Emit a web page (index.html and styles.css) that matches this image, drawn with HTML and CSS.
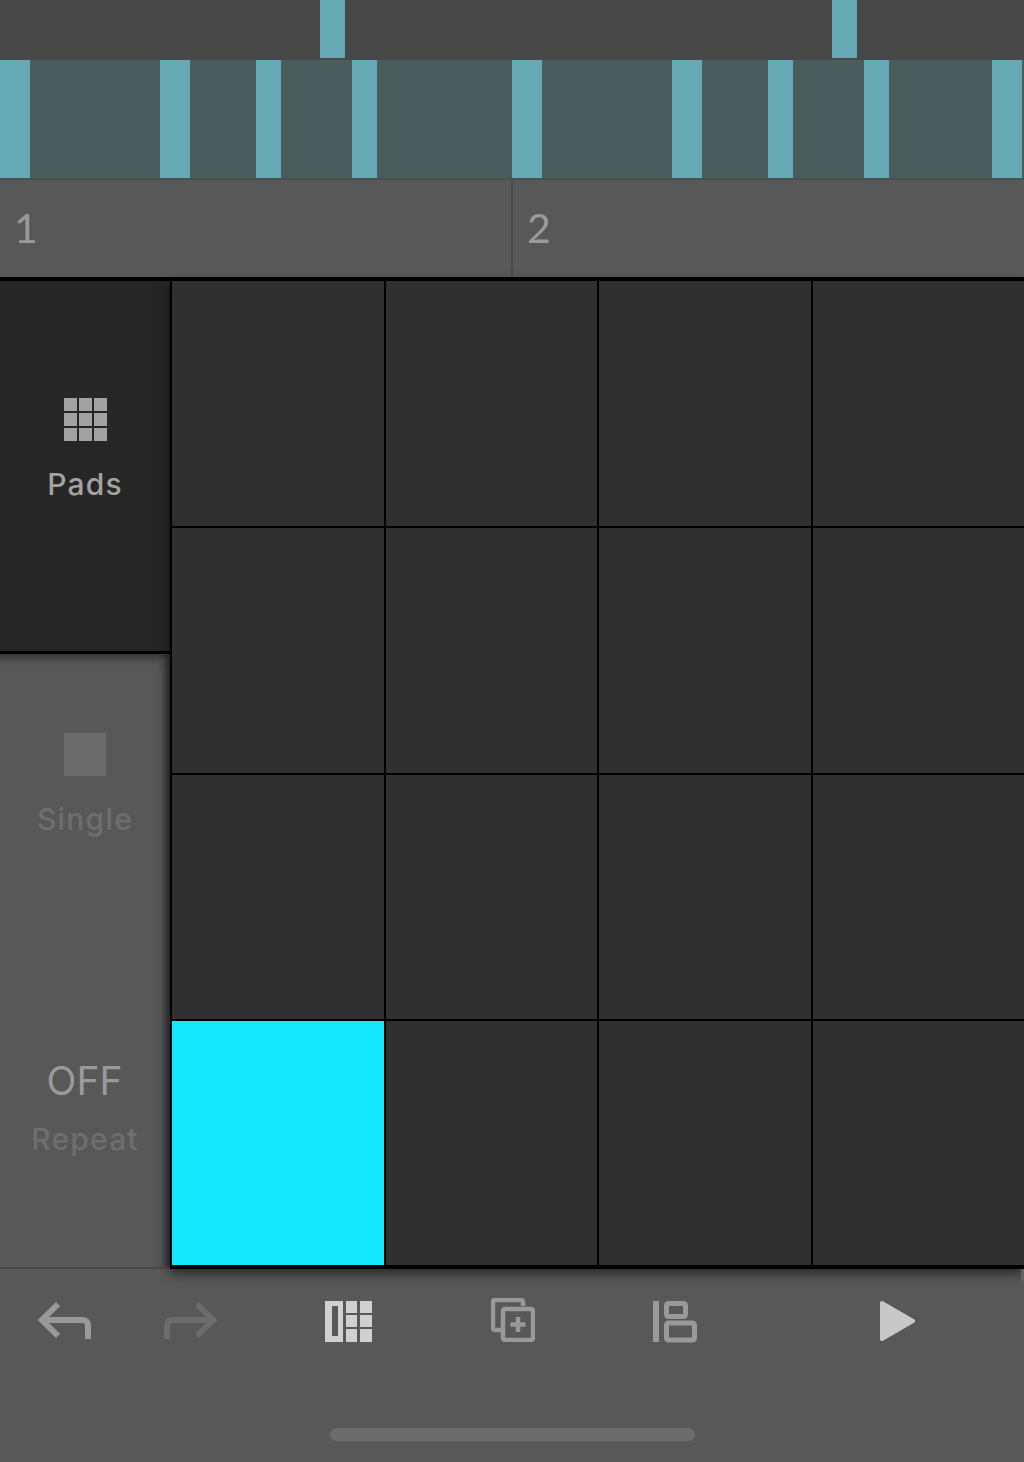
FILE: index.html
```html
<!DOCTYPE html>
<html lang="en">
<head>
    <meta charset="UTF-8">
    <meta name="viewport" content="width=device-width, initial-scale=1.0">
    <title>Pads</title>
    <link rel="stylesheet" href="styles.css">
</head>
<body>
    <div class="app">
        <!-- note lanes -->
        <div class="lane lane-top">
            <div class="note" style="left: 320px; width: 25px"></div>
            <div class="note" style="left: 832px; width: 25px"></div>
        </div>
        <div class="lane lane-main">
            <div class="note" style="left: 0; width: 30px"></div>
            <div class="note" style="left: 160px; width: 30px"></div>
            <div class="note" style="left: 256px; width: 25px"></div>
            <div class="note" style="left: 352px; width: 25px"></div>
            <div class="note" style="left: 512px; width: 30px"></div>
            <div class="note" style="left: 672px; width: 30px"></div>
            <div class="note" style="left: 768px; width: 25px"></div>
            <div class="note" style="left: 864px; width: 25px"></div>
            <div class="note" style="left: 992px; width: 30px"></div>
        </div>

        <div class="ruler">
            <div class="bar">1</div>
            <div class="bar">2</div>
        </div>

        <div class="main">
            <div class="side">
                <div class="side-btn pads">
                    <svg class="side-icon" viewBox="0 0 43 43">
                        <path fill="#a2a2a2" d="M0 0h13v13H0zM15 0h13v13H15zM30 0h13v13H30zM0 15h13v13H0zM15 15h13v13H15zM30 15h13v13H30zM0 30h13v13H0zM15 30h13v13H15zM30 30h13v13H30z"/>
                    </svg>
                    <span class="side-label">Pads</span>
                </div>
                <div class="side-lower">
                    <div class="side-btn single">
                        <div class="square"></div>
                        <span class="side-label">Single</span>
                    </div>
                    <div class="side-btn repeat">
                        <span class="off">OFF</span>
                        <span class="side-label">Repeat</span>
                    </div>
                </div>
            </div>

            <div class="pad-grid">
                <div class="pad"></div><div class="pad"></div><div class="pad"></div><div class="pad"></div>
                <div class="pad"></div><div class="pad"></div><div class="pad"></div><div class="pad"></div>
                <div class="pad"></div><div class="pad"></div><div class="pad"></div><div class="pad"></div>
                <div class="pad active"></div><div class="pad"></div><div class="pad"></div><div class="pad"></div>
            </div>
        </div>

        <div class="toolbar">
            <svg class="tool undo" width="54" height="38" viewBox="0 0 54 38" fill="none" stroke="#999" stroke-width="6">
                <path d="M21 3 L5 19 L21 35"/>
                <path d="M5 19 H45 Q51 19 51 25 V38"/>
            </svg>
            <svg class="tool redo" width="54" height="38" viewBox="0 0 54 38" fill="none" stroke="#6c6c6c" stroke-width="6">
                <path d="M33 3 L49 19 L33 35"/>
                <path d="M49 19 H9 Q3 19 3 25 V38"/>
            </svg>
            <svg class="tool layout" width="47" height="41" viewBox="0 0 47 41">
                <path fill="#d0d0d0" fill-rule="evenodd" d="M0 0H18V41H0zM7 5V35H13V5z"/>
                <path fill="#d0d0d0" d="M21 0h11v12H21zM35 0h12v12H35zM21 14h11v12H21zM35 14h12v12H35zM21 28h11v13H21zM35 28h12v13H35z"/>
            </svg>
            <svg class="tool dup" width="44" height="44" viewBox="0 0 44 44" fill="none" stroke="#999" stroke-width="4.500">
                <path d="M32 8 V4 Q32 2 30 2 H4 Q2 2 2 4 V30 Q2 32 4 32 H10"/>
                <rect x="12" y="11" width="30" height="31" rx="2"/>
                <path d="M27 19 V34 M19.500 26.500 H34.500"/>
            </svg>
            <svg class="tool align" width="44" height="42" viewBox="0 0 44 42">
                <path fill="#999" d="M0 0H6V41H0z"/>
                <rect x="13.500" y="2.500" width="19" height="13" rx="2" fill="none" stroke="#999" stroke-width="5"/>
                <rect x="13.500" y="22" width="28" height="17" rx="2" fill="none" stroke="#999" stroke-width="5"/>
            </svg>
            <svg class="tool play" width="35" height="40" viewBox="0 0 35 40">
                <path fill="#c8c8c8" stroke="#c8c8c8" stroke-width="4" stroke-linejoin="round" d="M2 2 L33 20 L2 38 Z"/>
            </svg>
        </div>

        <div class="home-bar"></div>
    </div>
</body>
</html>
```

FILE: styles.css
```css
body {
    margin: 0;
    background: #585858;
    font-family: "Inter", "Liberation Sans", sans-serif;
}
.app {
    width: 1024px;
    height: 1462px;
    position: relative;
    overflow: hidden;
    display: flex;
    flex-direction: column;
}

/* lanes */
.lane {
    position: relative;
    flex: none;
}
.lane-top {
    height: 60px;
    background: #484848;
}
.lane-top .note {
    height: 58px;
}
.lane-main {
    height: 118px;
    background: #4b5c5f;
    border-bottom: 2px solid #4a4f50;
}
.note {
    position: absolute;
    top: 0;
    height: 100%;
    background: #64a9b3;
}

/* ruler */
.ruler {
    flex: none;
    height: 97px;
    display: flex;
    background: #585858;
}
.bar {
    flex: 1;
    box-sizing: border-box;
    padding: 25px 0 0 14px;
    font-family: "Lato", "Liberation Sans", sans-serif;
    font-size: 41px;
    line-height: 46px;
    color: #9a9a9a;
}
.bar + .bar {
    border-left: 2px solid #4a4a4a;
}

/* middle part */
.main {
    flex: none;
    height: 992px;
    display: flex;
    background: #000;
    border-top: 4px solid #000;
    box-sizing: border-box;
}
.side {
    width: 170px;
    flex: none;
    display: flex;
    flex-direction: column;
    background: #000;
}
.side-btn {
    display: flex;
    flex-direction: column;
    align-items: center;
    box-sizing: border-box;
}
.pads {
    height: 370px;
    padding-top: 117px;
    background: #262626;
}
.side-lower {
    flex: 1;
    margin-top: 3px;
    display: flex;
    flex-direction: column;
    background: #585858;
    border-bottom: 2px solid #4a4a4a;
    box-shadow: inset -8px 8px 8px -4px rgba(0,0,0,0.45);
}
.single {
    padding-top: 79px;
    height: 385px;
}
.repeat {
    flex: 1;
    padding-top: 17px;
}
.side-icon {
    width: 43px;
    height: 43px;
}
.square {
    width: 42px;
    height: 43px;
    background: #6c6c6c;
}
.side-label {
    margin-top: 23px;
    font-size: 30px;
    font-weight: 500;
    line-height: 40px;
    letter-spacing: 1.2px;
    color: #a2a2a2;
}
.single .side-label,
.repeat .side-label {
    color: #6e6e6e;
}
.repeat .side-label {
    margin-top: 13px;
}
.off {
    margin-right: 1px;
    font-size: 39px;
    line-height: 50px;
    color: #9a9a9a;
}

/* pads */
.pad-grid {
    flex: 1;
    display: grid;
    grid-template-columns: repeat(4, 1fr);
    grid-template-rows: 245px 245px 244px 244px;
    gap: 2px;
    padding: 0 0 4px 2px;
    background: #000;
    box-shadow: 0 4px 12px rgba(0,0,0,0.6);
    position: relative;
    z-index: 1;
}
.pad {
    background: #303030;
}
.pad.active {
    background: #16e9ff;
}

/* bottom */
.toolbar {
    flex: 1;
    display: block;
    position: relative;
    background: #585858;
}
/* shadow stops short of the right edge */
.toolbar::after {
    content: "";
    position: absolute;
    top: 0;
    right: 0;
    z-index: 2;
    width: 3px;
    height: 12px;
    background: #626262;
}
.tool {
    position: absolute;
    top: 32px;
}
.undo { left: 37px; }
.redo { left: 164px; }
.layout { left: 325px; }
.dup { left: 491px; top: 29px; }
.align { left: 653px; }
.play { left: 880px; }
.home-bar {
    position: absolute;
    left: 330px;
    top: 1428px;
    width: 365px;
    height: 13px;
    border-radius: 7px;
    background: #6c6c6c;
}
```
